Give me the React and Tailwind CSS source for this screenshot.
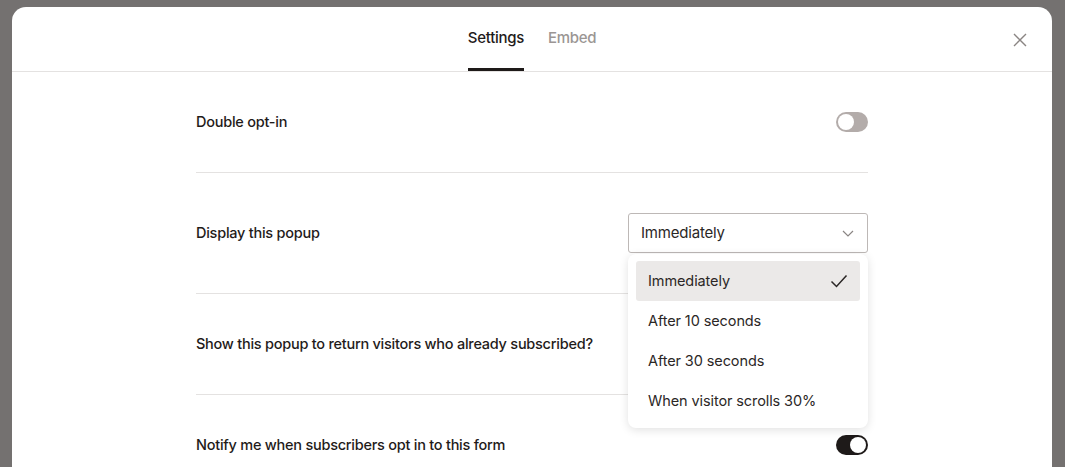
import React, { useState } from "react";

const options = [
  "Immediately",
  "After 10 seconds",
  "After 30 seconds",
  "When visitor scrolls 30%",
];

function Toggle({ on }) {
  return (
    <div
      className={`w-8 h-5 rounded-full p-[2px] flex ${
        on ? "bg-[#1e1a19] justify-end" : "bg-[#b3acaa] justify-start"
      }`}
    >
      <div className="w-4 h-4 rounded-full bg-white" />
    </div>
  );
}

export default function App() {
  const [value, setValue] = useState("Immediately");

  return (
    <div
      className="h-screen overflow-hidden bg-[#747170] pt-[7px] pl-3 pr-[13px]"
      style={{ fontFamily: "Inter, 'Noto Sans', sans-serif" }}
    >
      <div className="bg-white rounded-t-[14px] h-full text-[#1f1b1a]">
        {/* Header */}
        <div className="h-[65px] border-b border-[#e4e2e1] grid grid-cols-[1fr_auto_1fr]">
          <div />
          <div className="flex gap-6 h-full">
            <button className="h-full flex items-center border-b-[3px] border-[#1e1a19] pt-[2px] text-[15px] font-medium tracking-[-0.3px]">
              Settings
            </button>
            <button className="h-full flex items-center border-b-[3px] border-transparent pt-[2px] text-[15px] font-medium text-[#9b9694] tracking-[-0.3px]">
              Embed
            </button>
          </div>
          <div className="flex items-center justify-end pr-[25px] pt-[1px]">
            <svg width="14" height="14" viewBox="0 0 14 14" fill="none" stroke="#8a8583" strokeWidth="1.4">
              <path d="M1 1l12 12M13 1L1 13" />
            </svg>
          </div>
        </div>

        {/* Settings rows */}
        <div className="max-w-[672px] mx-auto text-[14.5px] font-medium tracking-[-0.25px]">
          <div className="py-10 border-b border-[#e4e2e1] flex items-center justify-between">
            <span className="leading-5 -mt-px">Double opt-in</span>
            <Toggle on={false} />
          </div>

          <div className="py-10 border-b border-[#e4e2e1] flex items-center justify-between">
            <span className="leading-5 -mt-px">Display this popup</span>
            <div className="relative w-60">
              <div className="h-10 border border-[#bdb8b6] rounded-[3px] flex items-center justify-between pl-[12px] pr-[12px] font-normal text-[#2b2726] text-[15px] tracking-[-0.2px]">
                <span>{value}</span>
                <svg width="14" height="14" viewBox="0 0 14 14" fill="none" stroke="#8a8583" strokeWidth="1.2">
                  <path d="M2 5l5 5 5-5" />
                </svg>
              </div>
              <div className="absolute left-0 right-0 top-[41px] z-10 bg-white rounded-lg shadow-[0_2px_10px_rgba(0,0,0,0.12)] py-[7px] px-2 font-normal text-[#2b2726] tracking-[-0.1px]">
                {options.map((opt) => (
                  <div
                    key={opt}
                    onClick={() => setValue(opt)}
                    className={`h-10 rounded-[3px] px-3 flex items-center justify-between cursor-pointer ${
                      opt === value ? "bg-[#ebe9e8]" : ""
                    }`}
                  >
                    <span>{opt}</span>
                    {opt === value && (
                      <svg width="18" height="14" viewBox="0 0 18 14" fill="none" stroke="#2b2726" strokeWidth="1.5">
                        <path d="M1.5 7.5l5 5L16.5 1.5" />
                      </svg>
                    )}
                  </div>
                ))}
              </div>
            </div>
          </div>

          <div className="py-10 border-b border-[#e4e2e1] flex items-center justify-between">
            <span className="leading-5 -mt-px">Show this popup to return visitors who already subscribed?</span>
            <div className="h-5" />
          </div>

          <div className="py-10 border-b border-[#e4e2e1] flex items-center justify-between">
            <span className="leading-5 -mt-px">Notify me when subscribers opt in to this form</span>
            <Toggle on={true} />
          </div>
        </div>
      </div>
    </div>
  );
}
